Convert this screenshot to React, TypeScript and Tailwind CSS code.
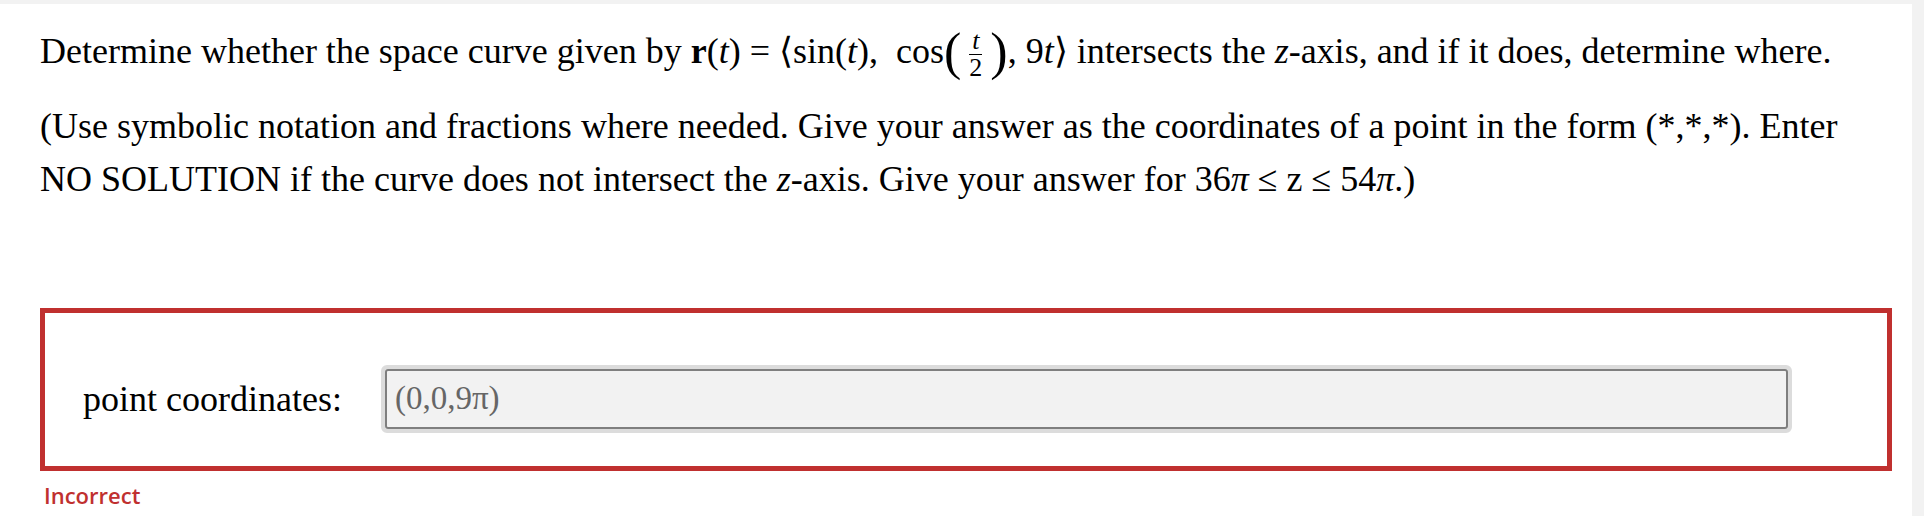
import React from 'react'

const serif = { fontFamily: '"Liberation Serif", "Times New Roman", serif' }

function Frac({ num, den }: { num: string; den: string }) {
  return (
    <span className="inline-flex flex-col items-center align-middle text-[26px] leading-[26px] mx-[5px]">
      <span className="italic px-[3px] border-b border-black">{num}</span>
      <span className="px-[3px]">{den}</span>
    </span>
  )
}

export default function App() {
  return (
    <div className="w-full h-[516px] bg-[#f2f2f2] pt-[4px] pr-[12px]" style={serif}>
      <div className="h-full bg-white pl-[40px] pr-[20px] text-black">
        <p className="text-[36px] leading-[52px] pt-[21px] whitespace-nowrap">
          Determine whether the space curve given by <b>r</b>(<i>t</i>) = ⟨sin(<i>t</i>),&nbsp; cos
          <span className="inline-block text-[52px] leading-[52px] font-light align-middle -mt-[6px]">(</span>
          <Frac num="t" den="2" />
          <span className="inline-block text-[52px] leading-[52px] font-light align-middle -mt-[6px]">)</span>, 9<i>t</i>⟩ intersects the <i>z</i>-axis, and if it does, determine where.
        </p>
        <p className="text-[36px] leading-[53px] mt-[19px] whitespace-nowrap">
          (Use symbolic notation and fractions where needed. Give your answer as the coordinates of a point in the form (*,*,*). Enter
          <br />
          NO SOLUTION if the curve does not intersect the <i>z</i>-axis. Give your answer for 36<i>π</i> ≤ z ≤ 54<i>π</i>.)
        </p>
        <div className="mt-[102px] h-[163px] border-[5px] border-[#c0302f] pt-[52px] pl-[38px] pr-[95px]">
          <div className="flex items-center">
            <span className="text-[36px] whitespace-nowrap mr-[39px]">point coordinates:</span>
            <div className="flex-1 h-[68px] rounded-[6px] border-[4px] border-[#dcdcdc]">
              <div className="h-full rounded-[3px] border-[2px] border-[#7f7f7f] bg-[#f2f2f2] flex items-center pl-[8px] text-[33px] text-[#666666]">
                (0,0,9π)
              </div>
            </div>
          </div>
        </div>
        <div
          className="text-[22px] font-semibold text-[#c0302f] pl-[4px] mt-[8px]"
          style={{ fontFamily: '"Open Sans", "Noto Sans", sans-serif' }}
        >
          Incorrect
        </div>
      </div>
    </div>
  )
}
